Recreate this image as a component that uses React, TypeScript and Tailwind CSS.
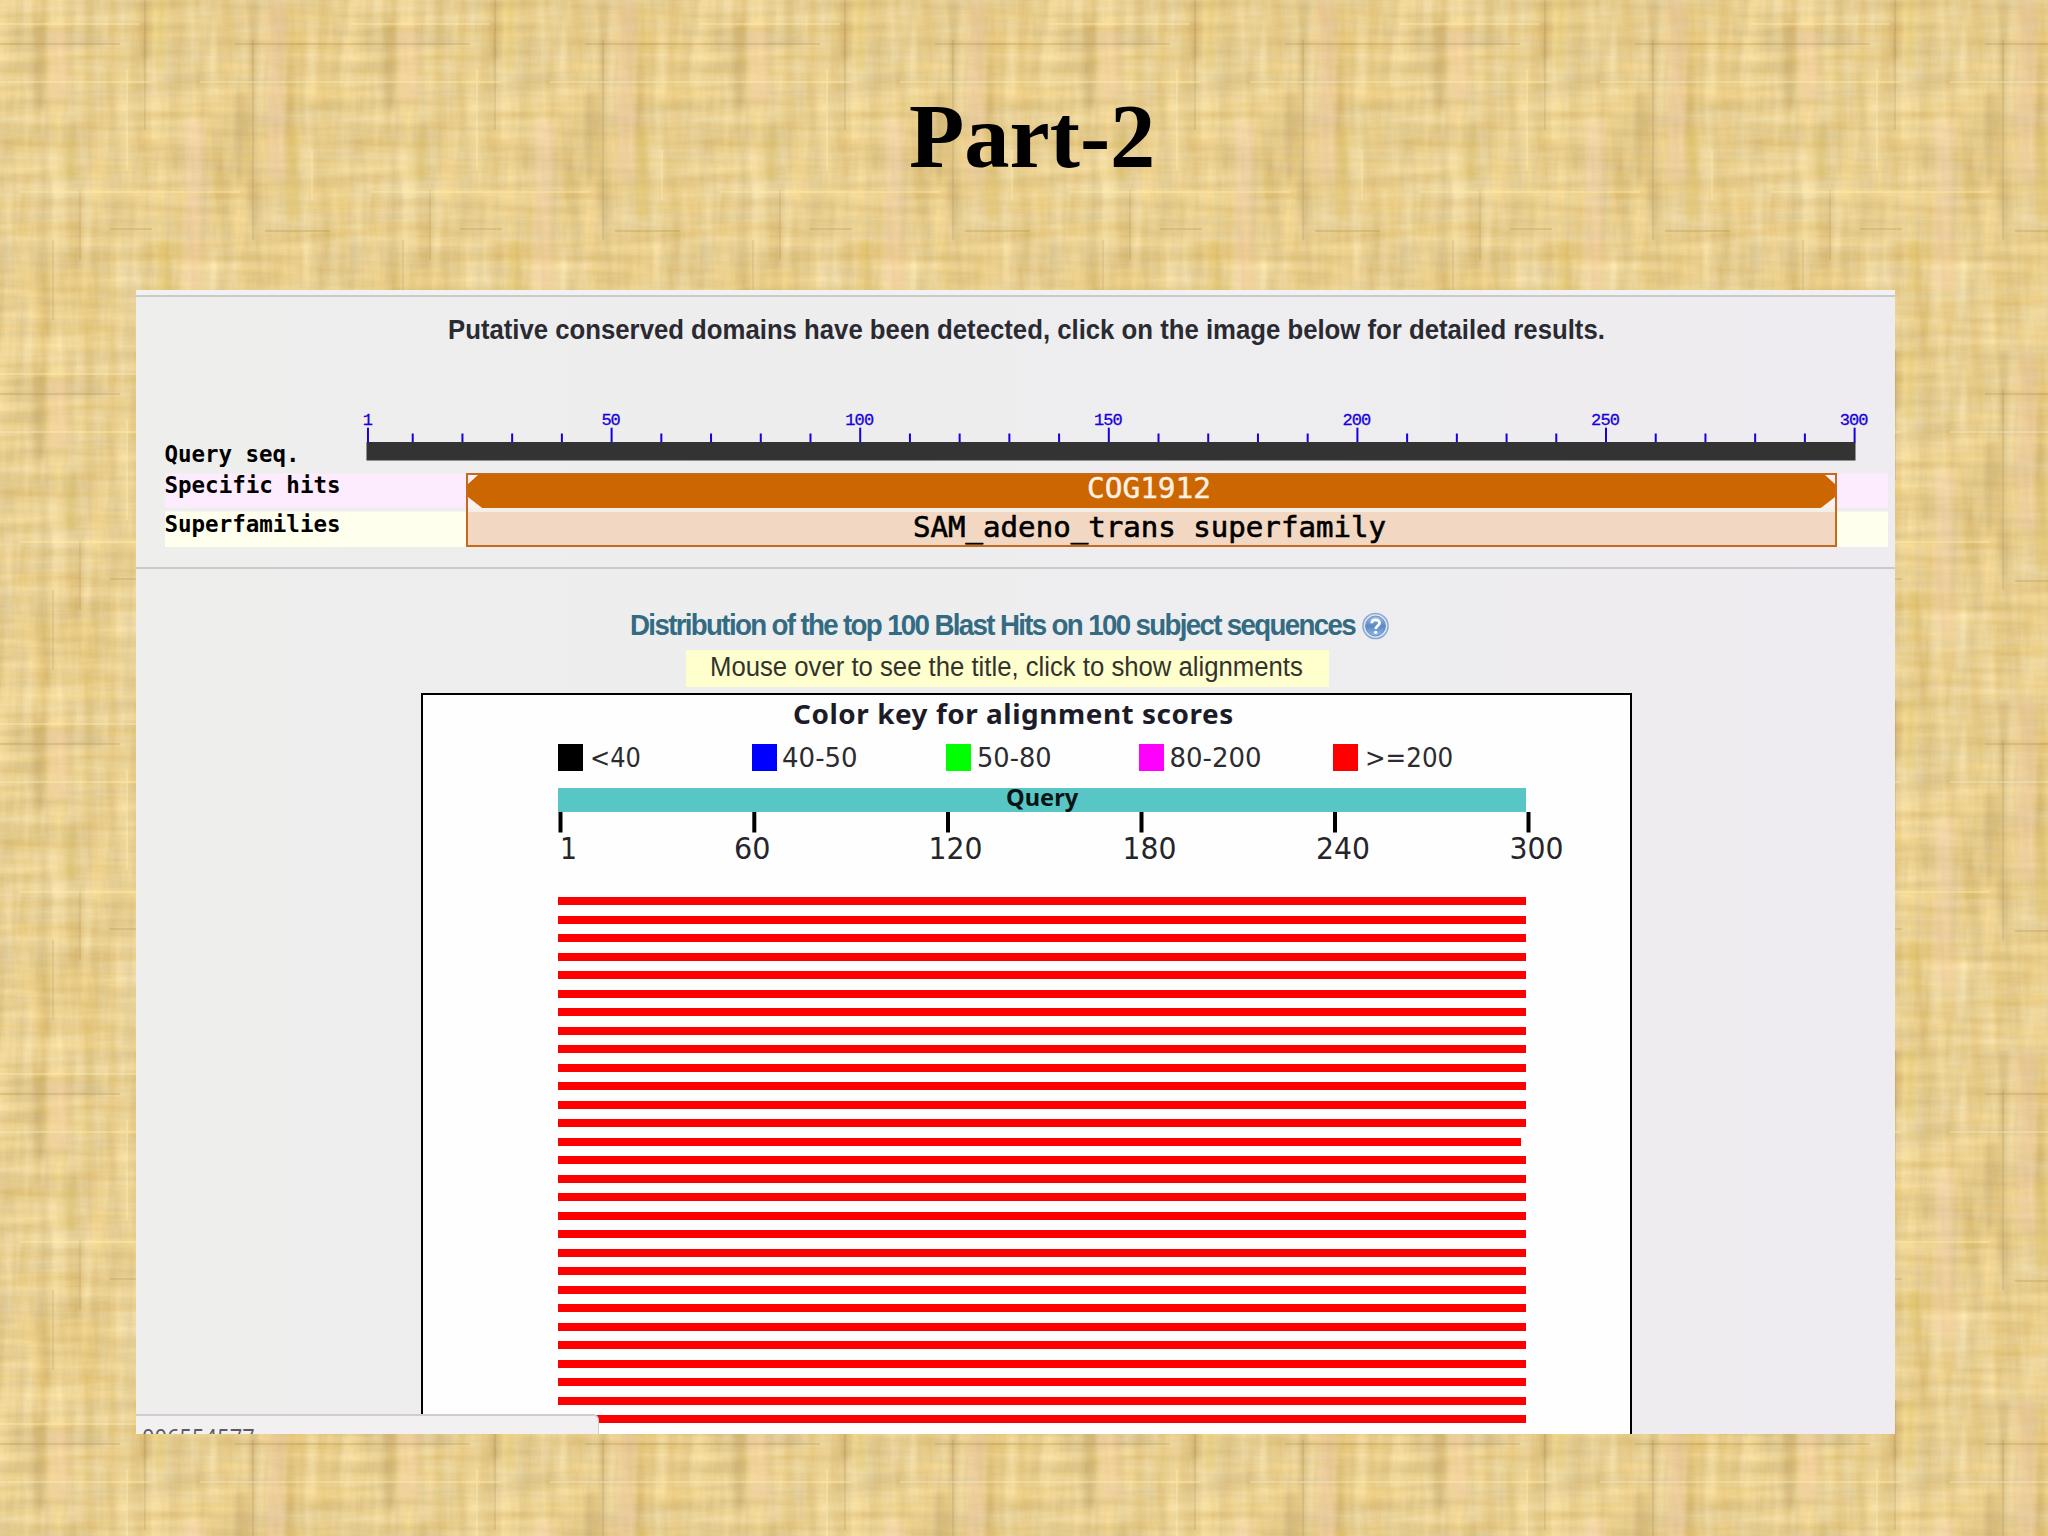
import React, { useLayoutEffect, useRef, useState } from "react";
import clsx from "clsx";

const HITS = Array.from({ length: 29 }, (_, i) => ({
  id: i,
  length: i === 13 ? 962.5 : 968,
}));

const SCORE_KEYS = [
  { label: "<40", color: "bg-black", gap: "ml-[7px]", width: 51 },
  { label: "40-50", color: "bg-[#0000ff]", gap: "ml-[5px]", width: 76 },
  { label: "50-80", color: "bg-[#00ff00]", gap: "ml-[6px]", width: 75 },
  { label: "80-200", color: "bg-[#ff00ff]", gap: "ml-[5px]", width: 92 },
  { label: ">=200", color: "bg-[#ff0000]", gap: "ml-[7px]", width: 88 },
];

const QUERY_TICKS = [
  { label: "1", x: 560.5, from: 560, width: 17 },
  { label: "60", x: 754.3, from: 734, width: 36.5 },
  { label: "120", x: 948, from: 928.5, width: 54 },
  { label: "180", x: 1141.5, from: 1122.5, width: 54 },
  { label: "240", x: 1335, from: 1316, width: 54 },
  { label: "300", x: 1528.5, from: 1509.5, width: 54 },
];

interface FitTextProps {
  width: number;
  className?: string;
  children: string;
}

// Stretches or squeezes a single line so that it fills the given width
function FitText({ width, className, children }: FitTextProps) {
  const ref = useRef<HTMLSpanElement>(null);
  const [scale, setScale] = useState(1);

  useLayoutEffect(() => {
    if (ref.current) setScale(width / ref.current.offsetWidth);
  }, [width, children]);

  return (
    <span className="block shrink-0" style={{ width }}>
      <span
        ref={ref}
        className={clsx(
          "inline-block origin-left whitespace-nowrap align-top leading-none",
          className
        )}
        style={{ transform: `scaleX(${scale})` }}
      >
        {children}
      </span>
    </span>
  );
}

function PapyrusBackground() {
  return (
    <svg className="absolute inset-0 -z-10 size-full" aria-hidden="true">
      <defs>
        <filter
          id="weave"
          x="0"
          y="0"
          width="100%"
          height="100%"
          colorInterpolationFilters="sRGB"
        >
          <feTurbulence
            type="fractalNoise"
            baseFrequency="0.06 0.009"
            numOctaves="5"
            seed="4"
            stitchTiles="stitch"
            result="v"
          />
          <feColorMatrix
            in="v"
            values="0.3 0 0 0 0.76  0.32 0.1 0 0 0.6  0.34 0.3 0 0 0.245  0 0 0 0 1"
            result="warp"
          />
          <feTurbulence
            type="fractalNoise"
            baseFrequency="0.009 0.08"
            numOctaves="5"
            seed="11"
            stitchTiles="stitch"
            result="h"
          />
          <feColorMatrix
            in="h"
            values="0.24 0 0 0 0.79  0.26 0.08 0 0 0.64  0.28 0.26 0 0 0.295  0 0 0 0 1"
            result="weft"
          />
          <feComposite
            in="warp"
            in2="weft"
            operator="arithmetic"
            k1="0"
            k2="0.5"
            k3="0.5"
            k4="0"
          />
        </filter>
        <filter id="soft">
          <feGaussianBlur stdDeviation="3" />
        </filter>
        <pattern
          id="papyrus"
          width="350"
          height="350"
          patternUnits="userSpaceOnUse"
        >
          <rect width="350" height="350" filter="url(#weave)" />
          <g filter="url(#soft)">
            <path
              d="M253 0V225M40 20V110M240 90V180M145 0V60M392 30V100"
              stroke="#a8803c"
              strokeOpacity="0.22"
              strokeWidth="9"
            />
            <path
              d="M0 43H110M200 43H340M60 228H150M265 228H350"
              stroke="#a8803c"
              strokeOpacity="0.16"
              strokeWidth="4"
            />
            <path
              d="M276 0V180M195 120V290M60 30V100"
              stroke="#f3c8a8"
              strokeOpacity="0.3"
              strokeWidth="18"
            />
            <path
              d="M160 0V70M292 130V220M165 240V290M71 130V180"
              stroke="#d9bd55"
              strokeOpacity="0.35"
              strokeWidth="12"
            />
          </g>
          <path
            d="M145 0V130M253 40V240M80 190V260M53 240V320"
            stroke="#9a7b3c"
            strokeOpacity="0.22"
            strokeWidth="1.4"
          />
          <path
            d="M0 44H120M235 44H350M110 229H152M265 231H330"
            stroke="#9a7b3c"
            strokeOpacity="0.26"
            strokeWidth="1.4"
          />
          <path
            d="M0 82H150M200 82H350M20 192H240M127 70V170M312 150V200M0 24H140"
            stroke="#fff0b4"
            strokeOpacity="0.35"
            strokeWidth="1.8"
          />
        </pattern>
      </defs>
      <rect width="100%" height="100%" fill="url(#papyrus)" />
    </svg>
  );
}

const MONO = "'DejaVu Sans Mono', monospace";

function DomainGraphic() {
  const xOf = (n: number) => 363 + n * 4.972;
  const ticks = [1, ...Array.from({ length: 30 }, (_, i) => (i + 1) * 10)];

  return (
    <svg viewBox="136 400 1758 160" className="h-[160px] w-[1758px] shrink-0">
      {/* Scale */}
      {ticks.map((n) => {
        const major = n === 1 || n % 50 === 0;
        const w = String(n).length * 9.6;
        return (
          <g key={n}>
            <rect
              x={xOf(n) - 1}
              y={major ? 427.7 : 433.5}
              width="2"
              height={major ? 15 : 9}
              fill="#1500e0"
            />
            {major && (
              <text
                x={xOf(n) - w / 2 - 0.5}
                y="425"
                textLength={w}
                fontFamily="'Liberation Mono', monospace"
                fontSize="17"
                fill="#1500e0"
                stroke="#1500e0"
                strokeWidth="0.3"
              >
                {n}
              </text>
            )}
          </g>
        );
      })}
      <rect x="366.5" y="442" width="1489" height="18.5" fill="#343333" />

      {/* Row backgrounds */}
      <rect x="165" y="473.5" width="1723" height="34.5" fill="#fdebfe" />
      <rect x="165" y="511.5" width="1723" height="35.5" fill="#feffed" />

      {/* Hit */}
      <rect x="466" y="473" width="1371" height="74" fill="#f3eee6" />
      <rect x="467" y="512" width="1369" height="34" fill="#f2d8c2" />
      <path
        d="M478 474H1825L1836 484V497L1821 508H482L467 497V484Z"
        fill="#cc6600"
      />
      <path d="M468 475H478L468 484Z M1825 475H1835V484Z" fill="#fdeffa" />
      <path d="M468 497L482 508H468Z M1835 497V508H1821Z" fill="#fbf0ee" />
      <rect
        x="467"
        y="474"
        width="1369"
        height="72"
        fill="none"
        stroke="#c7681a"
        strokeWidth="2"
      />

      <g fontFamily={MONO} fontWeight="bold" fontSize="22.5">
        <text x="164.5" y="461.5" textLength="135">
          Query seq.
        </text>
        <text x="164.5" y="492.5" textLength="176">
          Specific hits
        </text>
        <text x="164.5" y="531.5" textLength="176">
          Superfamilies
        </text>
      </g>
      <g fontFamily={MONO} fontSize="28">
        <text
          x="1087"
          y="497.5"
          textLength="124"
          lengthAdjust="spacingAndGlyphs"
          fill="#fff1e6"
          stroke="#fff1e6"
          strokeWidth="0.4"
        >
          COG1912
        </text>
        <text
          x="913"
          y="536.5"
          textLength="473"
          lengthAdjust="spacingAndGlyphs"
          stroke="#000"
          strokeWidth="0.6"
        >
          SAM_adeno_trans superfamily
        </text>
      </g>
    </svg>
  );
}

function HelpIcon() {
  return (
    <svg viewBox="0 0 28 28" className="h-[28px] w-[27px]">
      <defs>
        <linearGradient id="help" x1="0" y1="0" x2="0" y2="1">
          <stop offset="0" stopColor="#a3bfe4" />
          <stop offset="0.5" stopColor="#5b87c2" />
          <stop offset="1" stopColor="#8fb9ea" />
        </linearGradient>
      </defs>
      <circle cx="14" cy="14" r="13" fill="#dbe8f8" stroke="#8ea9cf" strokeWidth="1.6" />
      <circle cx="14" cy="14" r="10.3" fill="url(#help)" stroke="#6a8dc0" />
      <path
        d="M10 11.2C10 6.4 18.2 6.4 18.2 11C18.2 14 14.2 13.6 14.2 17"
        fill="none"
        stroke="#fff"
        strokeWidth="2.8"
      />
      <circle cx="14.2" cy="20.6" r="1.8" fill="#fff" />
    </svg>
  );
}

function AlignmentChart() {
  return (
    <div className="ml-[285px] flex min-h-0 w-[1211px] flex-1 flex-col border-x-2 border-t-2 border-black bg-[#fefefe]">
      <div className="ml-[370px] mt-[5px] h-[44px]">
        <FitText
          width={441}
          className="font-['Noto_Sans',sans-serif] text-[27px] font-bold tracking-[0.02em] text-[#1c1c28]"
        >
          Color key for alignment scores
        </FitText>
      </div>

      {/* Score colours */}
      <div className="ml-[135.4px] flex h-[27px]">
        {SCORE_KEYS.map((key) => (
          <div key={key.label} className="flex w-[193.7px] shrink-0 items-start">
            <div className={clsx("h-[27px] w-[25px] shrink-0", key.color)} />
            <div className={clsx("pt-px", key.gap)}>
              <FitText
                width={key.width}
                className="font-['DejaVu_Sans',sans-serif] text-[26px] text-[#2c2c30]"
              >
                {key.label}
              </FitText>
            </div>
          </div>
        ))}
      </div>

      {/* Query ruler */}
      <div className="ml-[135.4px] mt-[17px] flex h-[24px] w-[968px] shrink-0 justify-center bg-[#58c6c4]">
        <div className="-mt-[2px]">
          <FitText
            width={72}
            className="font-['Noto_Sans',sans-serif] text-[23px] font-bold text-[#081414]"
          >
            Query
          </FitText>
        </div>
      </div>
      <svg viewBox="423 812 1207 84" className="h-[84px] w-[1207px] shrink-0">
        {QUERY_TICKS.map((tick) => (
          <g key={tick.label}>
            <rect x={tick.x - 2} y="812" width="4" height="20.5" />
            <text
              x={tick.from}
              y="859"
              textLength={tick.width}
              lengthAdjust="spacingAndGlyphs"
              fontFamily="'DejaVu Sans', sans-serif"
              fontSize="30.5"
              fill="#25252a"
            >
              {tick.label}
            </text>
          </g>
        ))}
      </svg>

      {/* Hits */}
      <div className="ml-[135.4px] flex min-h-0 flex-1 flex-col gap-[10.51px] overflow-hidden pt-[1px]">
        {HITS.map((hit) => (
          <div
            key={hit.id}
            className="h-[8px] shrink-0 bg-[#ff0000]"
            style={{ width: hit.length }}
          />
        ))}
      </div>
    </div>
  );
}

export default function App() {
  return (
    <div className="relative isolate flex h-[1536px] w-[2048px] flex-col overflow-hidden">
      <PapyrusBackground />

      <h1 className="h-[290px] shrink-0 pl-[909px] pt-[90px]">
        <FitText
          width={246}
          className="font-['Liberation_Serif',serif] text-[92px] font-bold text-black"
        >
          Part-2
        </FitText>
      </h1>

      <main className="relative ml-[136px] flex h-[1143.5px] w-[1758.5px] flex-col overflow-hidden bg-linear-to-r from-[#eeeeed] to-[#eeecf0]">
        <section className="flex h-[279px] shrink-0 flex-col border-b-2 border-[#cacaca]">
          <div className="h-[7px] shrink-0 border-b-2 border-[#cacaca] bg-[#f0f1f0]" />
          <div className="ml-[312px] mt-[19px] h-[84px] shrink-0">
            <FitText
              width={1157}
              className="font-['Liberation_Sans',sans-serif] text-[28px] font-bold text-[#2a2a33]"
            >
              Putative conserved domains have been detected, click on the image below for detailed results.
            </FitText>
          </div>
          <DomainGraphic />
        </section>

        <section className="flex min-h-0 flex-1 flex-col">
          <div className="ml-[494px] mt-[41px] flex h-[40px] shrink-0 items-start">
            <FitText
              width={725}
              className="font-['Liberation_Sans',sans-serif] text-[30px] font-bold tracking-[-0.06em] text-[#336b83]"
            >
              Distribution of the top 100 Blast Hits on 100 subject sequences
            </FitText>
            <div className="ml-[7px] mt-[2px]">
              <HelpIcon />
            </div>
          </div>
          <div className="mb-[6px] ml-[550px] flex h-[37px] w-[643px] shrink-0 bg-[#feffcc] pl-[24px] pt-[4px]">
            <FitText
              width={593}
              className="font-['Liberation_Sans',sans-serif] text-[27px] text-[#33332e]"
            >
              Mouse over to see the title, click to show alignments
            </FitText>
          </div>
          <AlignmentChart />
        </section>

        {/* Link address bubble of the browser */}
        <div className="absolute bottom-0 left-0 h-[20px] w-[463px] overflow-hidden rounded-tr-[6px] border-r border-t-2 border-[#cfcdcd] bg-[#f2f0f0] pl-[6px] pt-[9px]">
          <FitText
            width={113}
            className="font-['Open_Sans',sans-serif] text-[25px] text-[#5a5a62]"
          >
            006554577
          </FitText>
        </div>
      </main>
    </div>
  );
}
